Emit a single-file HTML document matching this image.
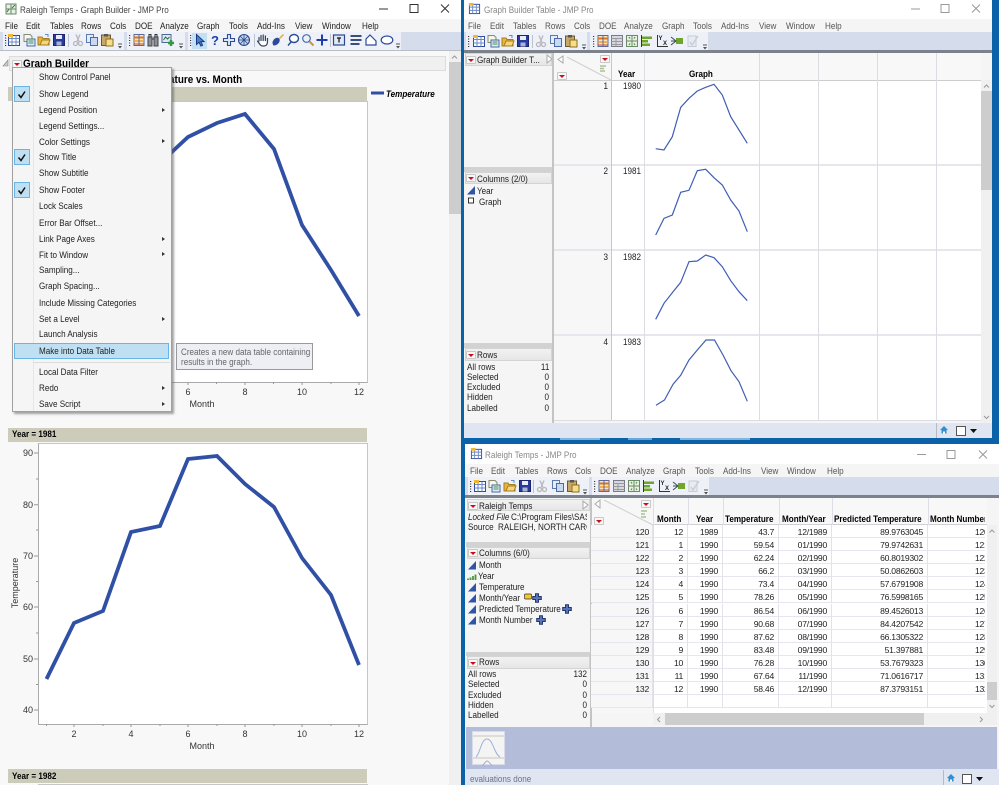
<!DOCTYPE html>
<html><head><meta charset="utf-8"><title>JMP Pro</title>
<style>
html,body{margin:0;padding:0;background:#0b62a8;}
body{position:relative;width:999px;height:785px;overflow:hidden;font:9px/10px "Liberation Sans",sans-serif;color:#222;filter:blur(.35px);}
.b{position:absolute;box-sizing:border-box;}
.t{position:absolute;white-space:nowrap;line-height:10px;transform:scaleX(.9);transform-origin:left center;}
.t[style*="right:"]{transform-origin:right center;}
.bd{font-weight:bold;color:#000;}
.g{color:#888;}
.r{position:absolute;display:flex;height:13.05px;left:591px;box-sizing:border-box;}
.r span{display:block;box-sizing:border-box;text-align:right;padding:2px 4px 0 0;border-right:1px solid #e2e2ea;border-bottom:1.5px solid #e6e6ee;height:13.05px;white-space:nowrap;overflow:hidden;line-height:10px;font-size:8.6px;letter-spacing:-.25px;}
.r span:nth-child(1){width:62px;background:#f7f7f7;padding-right:3px;}
.r span:nth-child(2),.r span:nth-child(3){width:35px;}
.r span:nth-child(4){width:56px;}
.r span:nth-child(5){width:53px;}
.r span:nth-child(6){width:96px;}
.r span:nth-child(7){width:57px;text-align:left;padding-left:47px;padding-right:0;border-right:0;}
.rb{position:absolute;box-sizing:border-box;width:10px;height:8px;background:#f8f8f8;border:1px solid #c8c8c8;border-radius:1px;}
.rb:after{content:"";position:absolute;left:1px;top:1.5px;border-left:3px solid transparent;border-right:3px solid transparent;border-top:3.5px solid #d00c18;}
.ph{position:absolute;box-sizing:border-box;background:linear-gradient(#f2f2f2,#e6e6e6);border:1px solid #d4d4d4;}
.band{position:absolute;left:8px;width:359px;height:13.5px;background:#cdcbb9;}
.frame{position:absolute;box-sizing:border-box;left:38px;width:330px;height:282px;background:#fff;border:1.5px solid #c6c6c6;border-left-color:#aaa;border-bottom-color:#aaa;}
.m{position:absolute;left:39px;white-space:nowrap;line-height:10px;color:#222;transform:scaleX(.9);transform-origin:left center;}
.ck{position:absolute;box-sizing:border-box;left:14px;width:15.5px;height:16px;background:#bfdff2;border:1px solid #69b6e6;}
.ar{position:absolute;left:162px;width:0;height:0;border-top:2.5px solid transparent;border-bottom:2.5px solid transparent;border-left:3px solid #333;}
</style></head>
<body>
<!-- wallpaper streaks -->
<div class="b" style="left:560px;top:438px;width:40px;height:2px;background:#7fb6dc"></div>
<div class="b" style="left:628px;top:438px;width:24px;height:2px;background:#6aa8d4"></div>
<div class="b" style="left:680px;top:438px;width:70px;height:2px;background:#7fb6dc"></div>
<!-- left window -->
<div class="b" style="left:0;top:0;width:461px;height:785px;background:#f8f8f8"></div>
<div class="b" style="left:0;top:0;width:461px;height:19px;background:#fff"></div>
<div class="b" style="left:0;top:19px;width:461px;height:13px;background:#f5f5f5"></div>
<div class="b" style="left:0;top:32px;width:461px;height:18px;background:#d5dcec"></div>
<div class="b" style="left:3px;top:32px;width:121px;height:18px;background:#eef1f8"></div>
<div class="b" style="left:127px;top:32px;width:58px;height:18px;background:#eef1f8"></div>
<div class="b" style="left:188px;top:32px;width:213px;height:18px;background:#eef1f8"></div>
<div class="b" style="left:192px;top:33px;width:15px;height:16px;background:#c5dff4"></div>
<div class="b" style="left:0;top:50px;width:461px;height:1px;background:#b9bdc6"></div>
<div class="b" style="left:449px;top:51px;width:12px;height:734px;background:#f0f0f0"></div>
<div class="b" style="left:449px;top:62px;width:12px;height:152px;background:#cdcdcd"></div>
<div class="ph" style="left:9px;top:56px;width:437px;height:15px;background:#f0f0f0;border-color:#dcdcdc"></div>
<div class="rb" style="left:12px;top:60px"></div>
<div class="band" style="top:87px"></div>
<div class="frame" style="top:101px"></div>
<div class="band" style="top:428px"></div>
<div class="frame" style="top:443px"></div>
<div class="band" style="top:769px"></div>
<div class="b" style="left:38px;top:784px;width:330px;height:1px;background:#c6c6c6"></div>

<!-- top right window -->
<div class="b" style="left:464px;top:0;width:528px;height:438px;background:#f5f5f5"></div>
<div class="b" style="left:464px;top:0;width:528px;height:19px;background:#fff"></div>
<div class="b" style="left:464px;top:19px;width:528px;height:13px;background:#f5f5f5"></div>
<div class="b" style="left:464px;top:32px;width:528px;height:18px;background:#d5dcec"></div>
<div class="b" style="left:466px;top:32px;width:121px;height:18px;background:#eef1f8"></div>
<div class="b" style="left:590px;top:32px;width:118px;height:18px;background:#eef1f8"></div>
<div class="b" style="left:464px;top:50px;width:528px;height:3px;background:#7d818c"></div>
<div class="b" style="left:554px;top:53px;width:427px;height:367px;background:#fff"></div>
<div class="b" style="left:554px;top:53px;width:57px;height:367px;background:#f7f7f7"></div>
<div class="b" style="left:611px;top:53px;width:370px;height:27px;background:#f8f8f8"></div>
<div class="b" style="left:552px;top:53px;width:2px;height:370px;background:#c4c4c4"></div>
<div class="ph" style="left:465px;top:53px;width:87px;height:13px"></div>
<div class="b" style="left:464px;top:167px;width:88px;height:5px;background:#d2d2d2"></div>
<div class="ph" style="left:465px;top:172px;width:87px;height:12px"></div>
<div class="b" style="left:464px;top:343px;width:88px;height:5px;background:#d2d2d2"></div>
<div class="ph" style="left:465px;top:348px;width:87px;height:13px"></div>
<div class="b" style="left:554px;top:80px;width:427px;height:1px;background:#cdcdcd"></div>
<div class="b" style="left:554px;top:164px;width:427px;height:2px;background:#e6e6ec"></div>
<div class="b" style="left:554px;top:249px;width:427px;height:2px;background:#e6e6ec"></div>
<div class="b" style="left:554px;top:334px;width:427px;height:2px;background:#e6e6ec"></div>
<div class="b" style="left:554px;top:420px;width:427px;height:1px;background:#dcdce2"></div>
<div class="b" style="left:611px;top:53px;width:1px;height:367px;background:#c8c8c8"></div>
<div class="b" style="left:644px;top:53px;width:1px;height:367px;background:#dcdce2"></div>
<div class="b" style="left:759px;top:53px;width:1px;height:367px;background:#dcdce2"></div>
<div class="b" style="left:818px;top:53px;width:1px;height:367px;background:#dcdce2"></div>
<div class="b" style="left:877px;top:53px;width:1px;height:367px;background:#dcdce2"></div>
<div class="b" style="left:936px;top:53px;width:1px;height:367px;background:#dcdce2"></div>
<div class="b" style="left:981px;top:80px;width:11px;height:343px;background:#f0f0f0"></div>
<div class="b" style="left:981px;top:91px;width:11px;height:99px;background:#cdcdcd"></div>
<div class="b" style="left:464px;top:423px;width:528px;height:15px;background:#dfe5f1"></div>
<div class="b" style="left:936px;top:423px;width:1px;height:15px;background:#b4bac8"></div>
<div class="b" style="left:956px;top:426px;width:10px;height:10px;background:#fff;border:1px solid #555"></div>
<div class="rb" style="left:600px;top:55px"></div>
<div class="rb" style="left:557px;top:72px"></div>
<div class="rb" style="left:466px;top:56px"></div>
<div class="rb" style="left:466px;top:174px"></div>
<div class="rb" style="left:466px;top:351px"></div>

<!-- lower window -->
<div class="b" style="left:465px;top:444px;width:534px;height:341px;background:#f5f5f5"></div>
<div class="b" style="left:465px;top:444px;width:534px;height:20px;background:#fff"></div>
<div class="b" style="left:465px;top:464px;width:534px;height:13px;background:#f5f5f5"></div>
<div class="b" style="left:465px;top:477px;width:534px;height:18px;background:#d5dcec"></div>
<div class="b" style="left:468px;top:477px;width:121px;height:18px;background:#eef1f8"></div>
<div class="b" style="left:592px;top:477px;width:117px;height:18px;background:#eef1f8"></div>
<div class="b" style="left:465px;top:495px;width:534px;height:3px;background:#7d818c"></div>
<div class="b" style="left:590px;top:498px;width:2px;height:229px;background:#c4c4c4"></div>
<div class="b" style="left:592px;top:498px;width:395px;height:215px;background:#fff"></div>
<div class="b" style="left:592px;top:498px;width:61px;height:215px;background:#f7f7f7"></div>
<div class="b" style="left:653px;top:498px;width:334px;height:27px;background:#f8f8f8;border-bottom:1px solid #d0d0d6"></div>
<div class="ph" style="left:467px;top:499px;width:123px;height:12px"></div>
<div class="b" style="left:466px;top:542px;width:124px;height:5px;background:#d2d2d2"></div>
<div class="ph" style="left:467px;top:547px;width:123px;height:12px"></div>
<div class="b" style="left:466px;top:652px;width:124px;height:4px;background:#d2d2d2"></div>
<div class="ph" style="left:467px;top:656px;width:123px;height:13px"></div>
<div class="rb" style="left:641px;top:500px"></div>
<div class="rb" style="left:594px;top:517px"></div>
<div class="rb" style="left:468px;top:502px"></div>
<div class="rb" style="left:468px;top:549px"></div>
<div class="rb" style="left:468px;top:659px"></div>

<div class="r" style="top:525.2px"><span>120</span><span>12</span><span>1989</span><span>43.7</span><span>12/1989</span><span>89.9763045</span><span>120</span></div>
<div class="r" style="top:538.25px"><span>121</span><span>1</span><span>1990</span><span>59.54</span><span>01/1990</span><span>79.9742631</span><span>121</span></div>
<div class="r" style="top:551.3px"><span>122</span><span>2</span><span>1990</span><span>62.24</span><span>02/1990</span><span>60.8019302</span><span>122</span></div>
<div class="r" style="top:564.35px"><span>123</span><span>3</span><span>1990</span><span>66.2</span><span>03/1990</span><span>50.0862603</span><span>123</span></div>
<div class="r" style="top:577.4px"><span>124</span><span>4</span><span>1990</span><span>73.4</span><span>04/1990</span><span>57.6791908</span><span>124</span></div>
<div class="r" style="top:590.45px"><span>125</span><span>5</span><span>1990</span><span>78.26</span><span>05/1990</span><span>76.5998165</span><span>125</span></div>
<div class="r" style="top:603.5px"><span>126</span><span>6</span><span>1990</span><span>86.54</span><span>06/1990</span><span>89.4526013</span><span>126</span></div>
<div class="r" style="top:616.55px"><span>127</span><span>7</span><span>1990</span><span>90.68</span><span>07/1990</span><span>84.4207542</span><span>127</span></div>
<div class="r" style="top:629.6px"><span>128</span><span>8</span><span>1990</span><span>87.62</span><span>08/1990</span><span>66.1305322</span><span>128</span></div>
<div class="r" style="top:642.65px"><span>129</span><span>9</span><span>1990</span><span>83.48</span><span>09/1990</span><span>51.397881</span><span>129</span></div>
<div class="r" style="top:655.7px"><span>130</span><span>10</span><span>1990</span><span>76.28</span><span>10/1990</span><span>53.7679323</span><span>130</span></div>
<div class="r" style="top:668.75px"><span>131</span><span>11</span><span>1990</span><span>67.64</span><span>11/1990</span><span>71.0616717</span><span>131</span></div>
<div class="r" style="top:681.8px"><span>132</span><span>12</span><span>1990</span><span>58.46</span><span>12/1990</span><span>87.3793151</span><span>132</span></div>
<div class="r" style="top:694.85px"><span></span><span></span><span></span><span></span><span></span><span></span><span></span></div>
<div class="b" style="left:653px;top:498px;width:1px;height:215px;background:#dedee6"></div>
<div class="b" style="left:688px;top:498px;width:1px;height:27px;background:#dedee6"></div>
<div class="b" style="left:723px;top:498px;width:1px;height:27px;background:#dedee6"></div>
<div class="b" style="left:779px;top:498px;width:1px;height:27px;background:#dedee6"></div>
<div class="b" style="left:832px;top:498px;width:1px;height:27px;background:#dedee6"></div>
<div class="b" style="left:928px;top:498px;width:1px;height:27px;background:#dedee6"></div>
<div class="b" style="left:592px;top:713px;width:405px;height:14px;background:#f5f5f5"></div>
<div class="b" style="left:653px;top:713px;width:334px;height:12px;background:#f0f0f0"></div>
<div class="b" style="left:665px;top:713px;width:259px;height:12px;background:#cdcdcd"></div>
<div class="b" style="left:987px;top:525px;width:10px;height:200px;background:#f0f0f0"></div>
<div class="b" style="left:987px;top:682px;width:10px;height:18px;background:#cdcdcd"></div>
<div class="b" style="left:466px;top:727px;width:531px;height:42px;background:#b3bcd9"></div>
<div class="b" style="left:472px;top:731px;width:33px;height:34px;background:#f4f4f4;border:1px solid #d8dbe8"></div>
<div class="b" style="left:465px;top:769px;width:534px;height:16px;background:#dfe5f1"></div>
<div class="b" style="left:943px;top:770px;width:1px;height:15px;background:#b4bac8"></div>
<div class="b" style="left:962px;top:774px;width:10px;height:10px;background:#fff;border:1px solid #555"></div>

<!-- SVG overlay: charts + icons -->
<svg class="b" style="left:0;top:0" width="999" height="785" viewBox="0 0 999 785" xmlns="http://www.w3.org/2000/svg">
<defs>
<symbol id="tb" viewBox="0 0 14 14"><rect x="1.500" y="2.500" width="11" height="10" fill="#fff" stroke="#2b4a9a"/><path d="M1.500 5.500h11M5 2.500v10M9 2.500v10M1.500 9h11" stroke="#6d8ac8" fill="none"/><path d="M1 1h5v3H1z" fill="#f2b632"/></symbol>
<symbol id="jr" viewBox="0 0 14 14"><path d="M2 1.500h6l2 2v5H2z" fill="#f6f6ee" stroke="#8a8a70"/><rect x="5" y="6" width="8" height="7" fill="#dfeaf6" stroke="#4a6a9a"/><path d="M6.500 8h5M6.500 10h5" stroke="#3f9a52"/></symbol>
<symbol id="fo" viewBox="0 0 14 14"><path d="M1 4h4l1 1.500h6V12H1z" fill="#e7b53f" stroke="#a47c1e"/><path d="M3 12l2-5h8l-2 5z" fill="#f6d67a" stroke="#a47c1e"/><path d="M8 1.500l3 0 0 2.500" stroke="#5a8fc0" fill="none"/></symbol>
<symbol id="sv" viewBox="0 0 14 14"><rect x="1.500" y="1.500" width="11" height="11" fill="#2a3a9a" stroke="#1c2670"/><rect x="4" y="2" width="6" height="4" fill="#e8ecf6"/><rect x="4.500" y="8.500" width="5" height="4" fill="#aab4d8"/></symbol>
<symbol id="ct" viewBox="0 0 14 14"><path d="M5 1.500l3 7M9 1.500l-3 7" stroke="#b8b8bc" stroke-width="1.300" fill="none"/><circle cx="4.500" cy="10.500" r="2" fill="none" stroke="#b8b8bc" stroke-width="1.300"/><circle cx="9.500" cy="10.500" r="2" fill="none" stroke="#b8b8bc" stroke-width="1.300"/></symbol>
<symbol id="cp" viewBox="0 0 14 14"><rect x="1.500" y="1.500" width="7" height="8" fill="#e6edf8" stroke="#5a7ab0"/><rect x="5.500" y="4.500" width="7" height="8" fill="#c9d9f0" stroke="#4a6aa8"/></symbol>
<symbol id="ps" viewBox="0 0 14 14"><rect x="1.500" y="2" width="9" height="10.500" fill="#c8a768" stroke="#6e5a30"/><rect x="4" y="1" width="4" height="2.500" fill="#555"/><rect x="6" y="6" width="7" height="7" fill="#f6dd8a" stroke="#8a6f20"/></symbol>
<symbol id="rp" viewBox="0 0 14 14"><rect x="2" y="1.500" width="10" height="11" fill="#f8e8c0" stroke="#5a6a9a"/><path d="M2 4.500h10" stroke="#e07028" stroke-width="2"/><path d="M2 8h10" stroke="#e8a030" stroke-width="1.500"/><path d="M2 11h10" stroke="#d04030"/><path d="M7 2v10" stroke="#5a6a9a"/></symbol>
<symbol id="bn" viewBox="0 0 14 14"><rect x="2" y="4" width="4" height="9" fill="#8a8f98" stroke="#444"/><rect x="8" y="4" width="4" height="9" fill="#8a8f98" stroke="#444"/><path d="M3 4V1.500h2V4M9 4V1.500h2V4M6 6h2" stroke="#333" fill="none"/></symbol>
<symbol id="gp" viewBox="0 0 14 14"><rect x="1" y="1.500" width="9" height="8" fill="#dfe7f2" stroke="#4a6a9a"/><path d="M2.500 7l2-3 2 2 2-2" stroke="#2f6a4a" fill="none"/><path d="M10 7v6M7 10h6" stroke="#2f9a3f" stroke-width="2.400"/></symbol>
<symbol id="dt" viewBox="0 0 14 14"><rect x="1.500" y="1.500" width="11" height="11" fill="#d8d8dc" stroke="#7a7a88"/><path d="M1.500 4.500h11M1.500 7.500h11M1.500 10.500h11M6 4.500v8" stroke="#9a9aa4" fill="none"/></symbol>
<symbol id="cl" viewBox="0 0 14 14"><rect x="1.500" y="1.500" width="11" height="11" fill="#e6f0dc" stroke="#6a8a6a"/><path d="M7 1.500v11M1.500 7h11" stroke="#6a8a6a" fill="none"/><path d="M4 3l1 1.500M10 3l-1 1.500M4 11l1-1.500M10 11l-1-1.500" stroke="#3f8a3f"/></symbol>
<symbol id="br" viewBox="0 0 14 14"><path d="M1.500 1v12" stroke="#333"/><rect x="2" y="2.500" width="10" height="2.500" fill="#6ea52a"/><rect x="2" y="6" width="6" height="2.500" fill="#6ea52a"/><rect x="2" y="9.500" width="8" height="2.500" fill="#6ea52a"/></symbol>
<symbol id="xy" viewBox="0 0 14 14"><path d="M2.500 1v11.500H13" stroke="#333" fill="none"/><text x="3.500" y="6" font-size="6" font-family="Liberation Sans" font-weight="bold" fill="#223">Y</text><text x="8" y="11" font-size="6" font-family="Liberation Sans" font-weight="bold" fill="#223">X</text></symbol>
<symbol id="ar2" viewBox="0 0 14 14"><rect x="6" y="4" width="7" height="6" fill="#6ea52a"/><path d="M1 3l5 4-5 4M1 7h5" stroke="#3a4a5a" fill="none"/></symbol>
<symbol id="ck2" viewBox="0 0 14 14"><rect x="2" y="2" width="8" height="10.500" fill="#e8ecf2" stroke="#c6ccd8"/><path d="M4 8l2 3 6-9" stroke="#c8ced8" stroke-width="1.500" fill="none"/></symbol>
<symbol id="cur" viewBox="0 0 14 14"><path d="M3.500 1.500v10l2.500-2.300 1.800 3.800 1.800-.8-1.800-3.600h3.300z" fill="#4a80d0" stroke="#1a3a80"/></symbol>
<symbol id="cr" viewBox="0 0 14 14"><path d="M5.500 1.500h3v4h4v3h-4v4h-3v-4h-4v-3h4z" fill="#dfe8f6" stroke="#2a4a9a" stroke-width="1.100"/></symbol>
<symbol id="gl" viewBox="0 0 14 14"><circle cx="7" cy="7" r="5.500" fill="#c8d8ee" stroke="#2a4a8a" stroke-width="1.100"/><path d="M7 1.500v11M1.500 7h11M3 3l8 8M11 3l-8 8" stroke="#2a4a8a" stroke-width=".8"/></symbol>
<symbol id="hd" viewBox="0 0 14 14"><path d="M3 8V4.500M5 7.500V2.500M7.200 7.500V2M9.400 7.500V3M11.500 8.500V5c0 5 .5 8-4.500 8-2.500 0-3-1.500-5.500-5" stroke="#33435a" stroke-width="1.200" fill="#fff" stroke-linecap="round"/></symbol>
<symbol id="br2" viewBox="0 0 14 14"><path d="M8 5l4-4 1 1-4 4z" fill="#e6a72a"/><path d="M1.500 9c2-5 6-5 7-3s-1 6-5 6.500c-1 .2-2-.5-2-3.500z" fill="#2a4a9a"/></symbol>
<symbol id="ls" viewBox="0 0 14 14"><ellipse cx="8" cy="5.500" rx="4.500" ry="4" fill="#fff" stroke="#2a4a9a" stroke-width="1.400"/><path d="M5 9l-3 3.500" stroke="#2a4a9a" stroke-width="1.400"/></symbol>
<symbol id="mg" viewBox="0 0 14 14"><circle cx="5.500" cy="5.500" r="3.800" fill="#e8f0fa" stroke="#4a6ab0" stroke-width="1.200"/><path d="M8.500 8.500l4 4" stroke="#c89a3a" stroke-width="2"/></symbol>
<symbol id="ph" viewBox="0 0 14 14"><path d="M7 1.500v11M1.500 7h11" stroke="#1c3fae" stroke-width="2"/></symbol>
<symbol id="tx" viewBox="0 0 14 14"><rect x="1.500" y="2" width="11" height="10" fill="#dfe8f6" stroke="#2a4a8a" stroke-width="1.200"/><path d="M5 5h4M7 5v4.500" stroke="#111" stroke-width="1.200"/></symbol>
<symbol id="ln" viewBox="0 0 14 14"><path d="M1.500 3h11M1.500 7h11M1.500 11h9" stroke="#22356e" stroke-width="1.700"/></symbol>
<symbol id="pl" viewBox="0 0 14 14"><path d="M2 12V6l4-4 3 3 3 3v4z" fill="#fff" stroke="#2a4a9a" stroke-width="1.200"/></symbol>
<symbol id="el" viewBox="0 0 14 14"><ellipse cx="7" cy="7" rx="5.800" ry="4" fill="#fff" stroke="#2a4a9a" stroke-width="1.200"/></symbol>
<symbol id="gr" viewBox="0 0 3 14"><path d="M1 2.500h1.200M1 5h1.200M1 7.500h1.200M1 10h1.200M1 12.500h1.200" stroke="#333"/></symbol>
<symbol id="dd" viewBox="0 0 6 6"><path d="M1 1h4" stroke="#555"/><path d="M1 3h4L3 5.500z" fill="#555"/></symbol>
<symbol id="ci" viewBox="0 0 10 10"><path d="M1 9.500L9 1v8.500z" fill="#2f55a8"/></symbol>
<symbol id="pc" viewBox="0 0 10 10"><path d="M3.500 .7h3v2.800h2.800v3H6.500v2.800h-3V6.500H.7v-3h2.800z" fill="#5a74b8" stroke="#24366e"/></symbol>
</defs>

<!-- title bar icons -->
<rect x="6" y="4" width="10" height="10" fill="#e8efe4" stroke="#6a8a6a"/><path d="M6 9h10M11 4v10" stroke="#6a8a6a"/><path d="M7 12l2-3M12 8l3-3" stroke="#3a7a3a"/>
<use href="#tb" x="468" y="2" width="13" height="13"/>
<use href="#tb" x="470" y="447" width="13" height="13"/>
<!-- window controls -->
<g stroke="#333" fill="none"><path d="M379 9h9"/><rect x="410" y="4.500" width="8" height="8"/><path d="M441 4.500l8 8M449 4.500l-8 8"/></g>
<g stroke="#999" fill="none"><path d="M911 9h9"/><rect x="941" y="4.500" width="8" height="8"/><path d="M972 4.500l8 8M980 4.500l-8 8"/>
<path d="M917 454.500h9"/><rect x="947" y="450.500" width="8" height="8"/><path d="M979 450.500l8 8M987 450.500l-8 8"/></g>

<!-- left toolbar -->
<g>
<use href="#gr" x="4" y="33" width="3" height="14"/>
<use href="#tb" x="7" y="33" width="14" height="14"/><use href="#jr" x="22" y="33" width="14" height="14"/><use href="#fo" x="37" y="33" width="14" height="14"/><use href="#sv" x="52" y="33" width="14" height="14"/>
<path d="M68.500 34v13" stroke="#bcc2d0"/>
<use href="#ct" x="71" y="33" width="14" height="14"/><use href="#cp" x="85" y="33" width="14" height="14"/><use href="#ps" x="100" y="33" width="14" height="14"/><use href="#dd" x="117" y="43" width="6" height="6"/>
<use href="#gr" x="128" y="33" width="3" height="14"/>
<use href="#rp" x="132" y="33" width="14" height="14"/><use href="#bn" x="146" y="33" width="14" height="14"/><use href="#gp" x="161" y="33" width="14" height="14"/><use href="#dd" x="178" y="43" width="6" height="6"/>
<use href="#gr" x="189" y="33" width="3" height="14"/>
<use href="#cur" x="193" y="33" width="14" height="14"/><use href="#cr" x="222" y="33" width="14" height="14"/><use href="#gl" x="237" y="33" width="14" height="14"/>
<text x="215" y="45" font-family="Liberation Sans" font-size="13" font-weight="bold" fill="#1c3fae" text-anchor="middle">?</text>
<path d="M254.500 34v13" stroke="#bcc2d0"/>
<use href="#hd" x="256" y="33" width="14" height="14"/><use href="#br2" x="271" y="33" width="14" height="14"/><use href="#ls" x="286" y="33" width="14" height="14"/><use href="#mg" x="301" y="33" width="14" height="14"/><use href="#ph" x="315" y="33" width="14" height="14"/>
<path d="M330.500 34v13" stroke="#bcc2d0"/>
<use href="#tx" x="332" y="33" width="14" height="14"/><use href="#ln" x="349" y="33" width="14" height="14"/><use href="#pl" x="364" y="33" width="14" height="14"/><use href="#el" x="380" y="33" width="14" height="14"/><use href="#dd" x="395" y="43" width="6" height="6"/>
</g>
<!-- top right toolbar -->
<g>
<use href="#gr" x="467" y="34" width="3" height="14"/>
<use href="#tb" x="472" y="34" width="14" height="14"/><use href="#jr" x="486" y="34" width="14" height="14"/><use href="#fo" x="501" y="34" width="14" height="14"/><use href="#sv" x="516" y="34" width="14" height="14"/>
<path d="M532.500 35v13" stroke="#bcc2d0"/>
<use href="#ct" x="534" y="34" width="14" height="14"/><use href="#cp" x="549" y="34" width="14" height="14"/><use href="#ps" x="564" y="34" width="14" height="14"/><use href="#dd" x="581" y="44" width="6" height="6"/>
<use href="#gr" x="592" y="34" width="3" height="14"/>
<use href="#rp" x="596" y="34" width="14" height="14"/><use href="#dt" x="610" y="34" width="14" height="14"/><use href="#cl" x="625" y="34" width="14" height="14"/><use href="#br" x="640" y="34" width="14" height="14"/><use href="#xy" x="655" y="34" width="14" height="14"/><use href="#ar2" x="670" y="34" width="14" height="14"/><use href="#ck2" x="686" y="34" width="14" height="14"/><use href="#dd" x="702" y="44" width="6" height="6"/>
</g>
<!-- lower toolbar -->
<g>
<use href="#gr" x="469" y="479" width="3" height="14"/>
<use href="#tb" x="473" y="479" width="14" height="14"/><use href="#jr" x="487" y="479" width="14" height="14"/><use href="#fo" x="503" y="479" width="14" height="14"/><use href="#sv" x="518" y="479" width="14" height="14"/>
<path d="M533.500 480v13" stroke="#bcc2d0"/>
<use href="#ct" x="535" y="479" width="14" height="14"/><use href="#cp" x="551" y="479" width="14" height="14"/><use href="#ps" x="566" y="479" width="14" height="14"/><use href="#dd" x="582" y="489" width="6" height="6"/>
<use href="#gr" x="593" y="479" width="3" height="14"/>
<use href="#rp" x="597" y="479" width="14" height="14"/><use href="#dt" x="612" y="479" width="14" height="14"/><use href="#cl" x="627" y="479" width="14" height="14"/><use href="#br" x="642" y="479" width="14" height="14"/><use href="#xy" x="657" y="479" width="14" height="14"/><use href="#ar2" x="672" y="479" width="14" height="14"/><use href="#ck2" x="687" y="479" width="14" height="14"/><use href="#dd" x="703" y="489" width="6" height="6"/>
</g>

<!-- disclosure triangles -->
<path d="M8 60v6H3z" fill="#c8c8c8" stroke="#888" stroke-width=".6"/>
<path d="M563 56l-5 3.500 5 3.500z" fill="#fff" stroke="#aaa"/>
<path d="M547 55l5 4-5 4z" fill="#fff" stroke="#aaa"/>
<path d="M600 500l-5 4 5 4z" fill="#fff" stroke="#aaa"/>
<path d="M583 501l5 4-5 4z" fill="#fff" stroke="#aaa"/>
<path d="M567 57l44 23M604 500l49 25" stroke="#cfcfcf" fill="none"/>
<path d="M600 66h6M600 68.500h4M600 71h5M641 511h6M641 514h4M641 517h5" stroke="#a8c090" stroke-width="1.500"/>

<!-- legend -->
<rect x="371" y="91.500" width="13" height="3" fill="#2f4fa3"/>

<!-- top chart -->
<polyline fill="none" stroke="#3050a6" stroke-width="3.800" stroke-linejoin="miter" points="46.500,345 74,330 103,300 131,222 160,163 188,137 217,123 245,114 274,149 302,225 331,270 359,316"/>
<g stroke="#999"><path d="M188 382v3M216.500 382v2M245 382v3M273.500 382v2M302 382v3M331 382v2M359 382v3"/></g>
<g font-family="Liberation Sans" font-size="9" fill="#333" text-anchor="middle"><text x="188" y="395">6</text><text x="245" y="395">8</text><text x="302" y="395">10</text><text x="359" y="395">12</text><text x="202" y="407">Month</text></g>

<!-- second chart -->
<polyline fill="none" stroke="#3050a6" stroke-width="3.800" stroke-linejoin="miter" points="46.500,679 74,623 103,611 131,532 160,526 188,459 217,456 245,484 274,507 302,558 331,595 359,665"/>
<g stroke="#999"><path d="M34 453h4M34 504.700h4M34 556h4M34 607h4M34 659h4M34 710h4M36 479h2M36 530h2M36 581.500h2M36 633h2M36 684.500h2"/>
<path d="M46.500 724v2M74 724v3M103 724v2M131 724v3M160 724v2M188 724v3M217 724v2M245 724v3M274 724v2M302 724v3M331 724v2M359 724v3"/></g>
<g font-family="Liberation Sans" font-size="9" fill="#333" text-anchor="end"><text x="33" y="456">90</text><text x="33" y="508">80</text><text x="33" y="559">70</text><text x="33" y="610">60</text><text x="33" y="662">50</text><text x="33" y="713">40</text></g>
<g font-family="Liberation Sans" font-size="9" fill="#333" text-anchor="middle"><text x="74" y="737">2</text><text x="131" y="737">4</text><text x="188" y="737">6</text><text x="245" y="737">8</text><text x="302" y="737">10</text><text x="359" y="737">12</text><text x="202" y="749">Month</text>
<text transform="translate(18 583) rotate(-90)">Temperature</text></g>

<!-- table sparklines -->
<g fill="none" stroke="#3f5eb4" stroke-width="1.200">
<polyline points="655.7,148.7 664,150 672.3,136.7 680.7,107.3 689,98.3 697.3,91 705.700,87.300 714,84.300 722.300,95 730.700,116.700 739,130 747.300,143.300"/>
<polyline points="655.7,235 664,218.3 672.3,215 680.7,192.3 689,190.3 697.3,170.7 705.7,169.3 714,177.7 722.3,185 730.7,200 739,211 747.3,231.700"/>
<polyline points="655.7,319.3 664,303.3 672.3,292.7 680.7,282.3 689,261.7 697.3,261 705.7,255 714,257.7 722.3,266.7 730.7,280.7 739,291.7 747.3,300.700"/>
<polyline points="656,405.300 664.500,400 673,384.300 680.700,375.300 689,360 697.300,350 706,340 714.500,340 723,355 731,370.700 739,381.700 747.300,401.300"/>
</g>

<!-- column icons -->
<use href="#ci" x="466" y="185" width="10" height="10"/>
<rect x="468.500" y="198" width="5" height="5" fill="#fff" stroke="#333"/>
<use href="#ci" x="467" y="560" width="10" height="10"/>
<path d="M468 580v-1.500M470.500 580v-2.500M473 580v-4M475.500 580v-5.500" stroke="#4a9a3a" stroke-width="1.800" fill="none"/>
<use href="#ci" x="467" y="582" width="10" height="10"/>
<use href="#ci" x="467" y="593" width="10" height="10"/>
<use href="#ci" x="467" y="604" width="10" height="10"/>
<use href="#ci" x="467" y="615" width="10" height="10"/>
<rect x="524.500" y="594" width="7" height="5" rx="1" fill="#f2c82a" stroke="#333" stroke-width=".7"/>
<use href="#pc" x="532" y="593" width="10" height="10"/>
<use href="#pc" x="562" y="604" width="10" height="10"/>
<use href="#pc" x="536" y="615" width="10" height="10"/>

<!-- scroll arrows -->
<g fill="none" stroke="#999"><path d="M452 58.500l2.500-2.500 2.500 2.500M984 87.500l2.500-2.500 2.500 2.500M984 416l2.500 2.500 2.500-2.500M989.500 532.500l2.500-2.500 2.500 2.500M989.500 705l2.500 2.500 2.500-2.500M660 717l-2.500 2.500 2.500 2.500M980 717l2.500 2.500-2.500 2.500"/></g>

<!-- home / dropdown status icons -->
<path d="M944 426l-4 4h1.500v3.500h5V430h1.500z" fill="#2f8fd0"/><path d="M943 433.500v-2h2v2" fill="#fff"/><path d="M970 429h7l-3.500 4z" fill="#111"/>
<path d="M951 774l-4 4h1.500v3.500h5V778h1.500z" fill="#2f8fd0"/><path d="M950 781.500v-2h2v2" fill="#fff"/><path d="M976 777h7l-3.500 4z" fill="#111"/>
<!-- thumbnail -->
<path d="M476 757c4-3 5-18 11-18s7 15 13 18" fill="none" stroke="#9db0dc"/><path d="M473 736h31M473 758h31" stroke="#ccc8b4"/><path d="M482 766c3-3 4-5 5-5s3 2 5 5" fill="none" stroke="#9db0dc"/>
</svg>

<!-- titles -->
<div class="t" style="left:20px;top:5px;color:#444">Raleigh Temps - Graph Builder - JMP Pro</div>
<div class="t g" style="left:484px;top:5px">Graph Builder Table - JMP Pro</div>
<div class="t g" style="left:485px;top:450px">Raleigh Temps - JMP Pro</div>

<!-- menus -->
<div class="t" style="left:5px;top:21px">File</div><div class="t" style="left:26px;top:21px">Edit</div><div class="t" style="left:50px;top:21px">Tables</div><div class="t" style="left:81px;top:21px">Rows</div><div class="t" style="left:110px;top:21px">Cols</div><div class="t" style="left:135px;top:21px">DOE</div><div class="t" style="left:160px;top:21px">Analyze</div><div class="t" style="left:197px;top:21px">Graph</div><div class="t" style="left:229px;top:21px">Tools</div><div class="t" style="left:257px;top:21px">Add-Ins</div><div class="t" style="left:295px;top:21px">View</div><div class="t" style="left:322px;top:21px">Window</div><div class="t" style="left:362px;top:21px">Help</div>

<div class="t" style="left:468px;top:21px;color:#555">File</div><div class="t" style="left:490px;top:21px;color:#555">Edit</div><div class="t" style="left:513px;top:21px;color:#555">Tables</div><div class="t" style="left:545px;top:21px;color:#555">Rows</div><div class="t" style="left:574px;top:21px;color:#555">Cols</div><div class="t" style="left:599px;top:21px;color:#555">DOE</div><div class="t" style="left:624px;top:21px;color:#555">Analyze</div><div class="t" style="left:662px;top:21px;color:#555">Graph</div><div class="t" style="left:693px;top:21px;color:#555">Tools</div><div class="t" style="left:721px;top:21px;color:#555">Add-Ins</div><div class="t" style="left:759px;top:21px;color:#555">View</div><div class="t" style="left:786px;top:21px;color:#555">Window</div><div class="t" style="left:825px;top:21px;color:#555">Help</div>

<div class="t" style="left:470px;top:466px;color:#555">File</div><div class="t" style="left:491px;top:466px;color:#555">Edit</div><div class="t" style="left:515px;top:466px;color:#555">Tables</div><div class="t" style="left:547px;top:466px;color:#555">Rows</div><div class="t" style="left:575px;top:466px;color:#555">Cols</div><div class="t" style="left:600px;top:466px;color:#555">DOE</div><div class="t" style="left:626px;top:466px;color:#555">Analyze</div><div class="t" style="left:663px;top:466px;color:#555">Graph</div><div class="t" style="left:695px;top:466px;color:#555">Tools</div><div class="t" style="left:723px;top:466px;color:#555">Add-Ins</div><div class="t" style="left:761px;top:466px;color:#555">View</div><div class="t" style="left:787px;top:466px;color:#555">Window</div><div class="t" style="left:827px;top:466px;color:#555">Help</div>

<!-- left window text -->
<div class="t bd" style="left:23px;top:59px;font-size:11px">Graph Builder</div>
<div class="t bd" style="right:757px;top:75px;font-size:11px">Temperature vs. Month</div>
<div class="t bd" style="left:386px;top:89px;font-style:italic">Temperature</div>
<div class="t bd" style="left:12px;top:429px">Year = 1981</div>
<div class="t bd" style="left:12px;top:771px">Year = 1982</div>

<!-- top right text -->
<div class="t" style="left:477px;top:55px">Graph Builder T...</div>
<div class="t" style="left:477px;top:174px">Columns (2/0)</div>
<div class="t" style="left:477px;top:186px">Year</div>
<div class="t" style="left:479px;top:197px">Graph</div>
<div class="t" style="left:477px;top:350px">Rows</div>
<div class="t" style="left:467px;top:362px">All rows</div><div class="t" style="left:467px;top:372px">Selected</div><div class="t" style="left:467px;top:382px">Excluded</div><div class="t" style="left:467px;top:392px">Hidden</div><div class="t" style="left:467px;top:403px">Labelled</div>
<div class="t" style="right:450px;top:362px">11</div><div class="t" style="right:450px;top:372px">0</div><div class="t" style="right:450px;top:382px">0</div><div class="t" style="right:450px;top:392px">0</div><div class="t" style="right:450px;top:403px">0</div>
<div class="t bd" style="left:618px;top:69px">Year</div>
<div class="t bd" style="left:689px;top:69px">Graph</div>
<div class="t" style="right:391px;top:81px">1</div><div class="t" style="right:358px;top:81px">1980</div>
<div class="t" style="right:391px;top:166px">2</div><div class="t" style="right:358px;top:166px">1981</div>
<div class="t" style="right:391px;top:252px">3</div><div class="t" style="right:358px;top:252px">1982</div>
<div class="t" style="right:391px;top:337px">4</div><div class="t" style="right:358px;top:337px">1983</div>

<!-- lower text -->
<div class="t" style="left:479px;top:501px">Raleigh Temps</div>
<div class="b" style="left:468px;top:512px;width:119px;height:21px;overflow:hidden">
<div class="t" style="left:0;top:0"><i>Locked File</i></div><div class="t" style="left:43px;top:0">C:\Program Files\SAS\JMP</div>
<div class="t" style="left:0;top:10px">Source</div><div class="t" style="left:30px;top:10px">RALEIGH, NORTH CAROLINA</div></div>
<div class="t" style="left:479px;top:548px">Columns (6/0)</div>
<div class="t" style="left:478.500px;top:560px">Month</div><div class="t" style="left:478px;top:571px">Year</div><div class="t" style="left:478.500px;top:582px">Temperature</div><div class="t" style="left:478.500px;top:593px">Month/Year</div><div class="t" style="left:478.500px;top:604px">Predicted Temperature</div><div class="t" style="left:478.500px;top:615px">Month Number</div>
<div class="t" style="left:479px;top:657px">Rows</div>
<div class="t" style="left:468px;top:669px">All rows</div><div class="t" style="left:468px;top:679px">Selected</div><div class="t" style="left:468px;top:690px">Excluded</div><div class="t" style="left:468px;top:700px">Hidden</div><div class="t" style="left:468px;top:710px">Labelled</div>
<div class="t" style="right:412px;top:669px">132</div><div class="t" style="right:412px;top:679px">0</div><div class="t" style="right:412px;top:690px">0</div><div class="t" style="right:412px;top:700px">0</div><div class="t" style="right:412px;top:710px">0</div>
<div class="t bd" style="left:657px;top:514px">Month</div><div class="t bd" style="left:696px;top:514px">Year</div><div class="t bd" style="left:725px;top:514px">Temperature</div><div class="t bd" style="left:782px;top:514px">Month/Year</div><div class="t bd" style="left:834px;top:514px">Predicted Temperature</div>
<div class="b" style="left:930px;top:514px;width:55px;height:12px;overflow:hidden"><div class="t bd" style="left:0;top:0">Month Number</div></div>
<div class="t" style="left:470px;top:774px;color:#6a7288">evaluations done</div>

<!-- popup menu -->
<div class="b" style="left:12px;top:67px;width:160px;height:345px;background:#f5f5f5;border:1px solid #a0a0a0;box-shadow:2px 2px 2px rgba(90,90,90,.55)">
<div class="b" style="left:20px;top:0;width:1px;height:343px;background:#e6e6e6"></div>
</div>
<div class="ck" style="top:86px"></div><div class="ck" style="top:149px"></div><div class="ck" style="top:182px"></div>
<div class="b" style="left:14px;top:343px;width:155px;height:16px;background:#bfdff2;border:1px solid #69b6e6"></div>
<div class="b" style="left:33px;top:362px;width:137px;height:1px;background:#dcdcdc"></div>
<svg class="b" style="left:14px;top:86px" width="16" height="113" viewBox="0 0 16 113" xmlns="http://www.w3.org/2000/svg"><g fill="none" stroke="#111" stroke-width="1.500"><path d="M4.500 8.500l2.500 3 4-6M4.500 71.500l2.500 3 4-6M4.500 104.500l2.500 3 4-6"/></g></svg>
<div class="m" style="top:72px">Show Control Panel</div>
<div class="m" style="top:88.500px">Show Legend</div>
<div class="m" style="top:105px">Legend Position</div><div class="ar" style="top:107.500px"></div>
<div class="m" style="top:120.500px">Legend Settings...</div>
<div class="m" style="top:136.500px">Color Settings</div><div class="ar" style="top:139px"></div>
<div class="m" style="top:152px">Show Title</div>
<div class="m" style="top:168px">Show Subtitle</div>
<div class="m" style="top:185px">Show Footer</div>
<div class="m" style="top:201px">Lock Scales</div>
<div class="m" style="top:218px">Error Bar Offset...</div>
<div class="m" style="top:234px">Link Page Axes</div><div class="ar" style="top:236.500px"></div>
<div class="m" style="top:249.500px">Fit to Window</div><div class="ar" style="top:252px"></div>
<div class="m" style="top:265px">Sampling...</div>
<div class="m" style="top:281px">Graph Spacing...</div>
<div class="m" style="top:298px">Include Missing Categories</div>
<div class="m" style="top:314px">Set a Level</div><div class="ar" style="top:316.500px"></div>
<div class="m" style="top:329px">Launch Analysis</div>
<div class="m" style="top:346px">Make into Data Table</div>
<div class="m" style="top:367px">Local Data Filter</div>
<div class="m" style="top:383px">Redo</div><div class="ar" style="top:385.500px"></div>
<div class="m" style="top:399px">Save Script</div><div class="ar" style="top:401.500px"></div>

<!-- tooltip -->
<div class="b" style="left:176px;top:343px;width:137px;height:27px;background:#eeeff5;border:1px solid #999"></div>
<div class="t" style="left:181px;top:347px;color:#666">Creates a new data table containing</div>
<div class="t" style="left:181px;top:357px;color:#666">results in the graph.</div>
</body></html>
